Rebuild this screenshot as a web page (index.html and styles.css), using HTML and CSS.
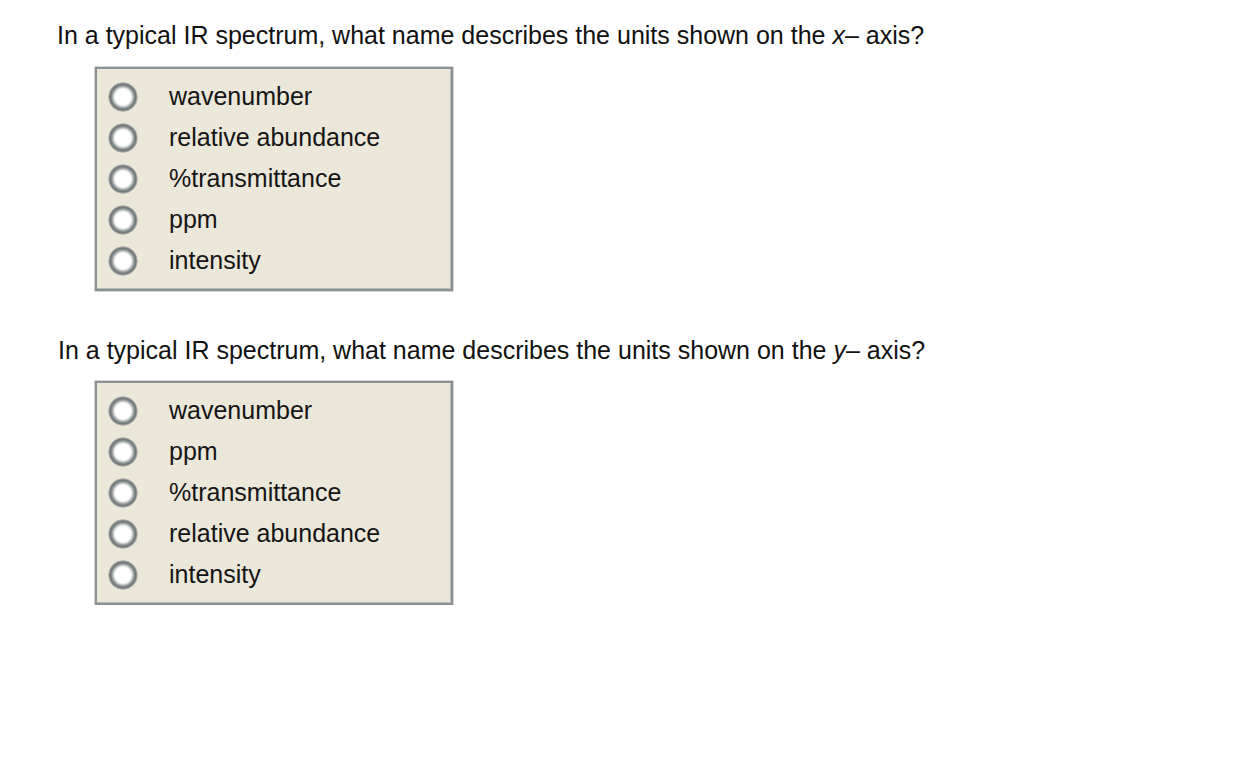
FILE: index.html
```html
<!DOCTYPE html>
<html>
<head>
<meta charset="utf-8">
<link rel="stylesheet" href="styles.css">
</head>
<body>
<div class="quiz">
  <section class="question">
    <p class="prompt">In a typical IR spectrum, what name describes the units shown on the <i>x</i>– axis?</p>
    <ul class="choices">
      <li class="choice"><span class="radio"></span><span class="label">wavenumber</span></li>
      <li class="choice"><span class="radio"></span><span class="label">relative abundance</span></li>
      <li class="choice"><span class="radio"></span><span class="label">%transmittance</span></li>
      <li class="choice"><span class="radio"></span><span class="label">ppm</span></li>
      <li class="choice"><span class="radio"></span><span class="label">intensity</span></li>
    </ul>
  </section>
  <section class="question second">
    <p class="prompt">In a typical IR spectrum, what name describes the units shown on the <i>y</i>– axis?</p>
    <ul class="choices">
      <li class="choice"><span class="radio"></span><span class="label">wavenumber</span></li>
      <li class="choice"><span class="radio"></span><span class="label">ppm</span></li>
      <li class="choice"><span class="radio"></span><span class="label">%transmittance</span></li>
      <li class="choice"><span class="radio"></span><span class="label">relative abundance</span></li>
      <li class="choice"><span class="radio"></span><span class="label">intensity</span></li>
    </ul>
  </section>
</div>
</body>
</html>
```
FILE: styles.css
```css
html, body {
  margin: 0;
  padding: 0;
  background: #ffffff;
}

body {
  font-family: "Liberation Sans", Arial, sans-serif;
  color: #111111;
}

.quiz {
  padding: 20px 0 0 57px;
}

.question {
  margin: 0;
}

.question.second {
  margin-top: 44px;
  padding-left: 1px;
}

.prompt {
  margin: 0;
  font-size: 25px;
  line-height: 30px;
}

.prompt i {
  font-style: italic;
}

.choices {
  list-style: none;
  margin: 17px 0 0 38px;
  padding: 14px 0 14px 0;
  width: 354px;
  background: #ebe7d9;
  border: 2px solid #8c9292;
  box-shadow: inset -1px -1px 0 #b7bbbb, 0 0 0 0.5px #a6abab;
  display: flex;
  flex-direction: column;
  gap: 13px;
}

.question.second .choices {
  margin-top: 16px;
  margin-left: 37px;
}

.choice {
  display: flex;
  align-items: center;
  height: 28px;
}

.radio {
  box-sizing: border-box;
  width: 28px;
  height: 28px;
  margin-left: 12px;
  border-radius: 50%;
  background: radial-gradient(circle at 50% 50%, #ffffff 0, #ffffff 7.5px, #e2e4e4 9px, #a4a9a9 10.5px, #6f7474 12.5px, #8c9191 14px);
  box-shadow: 0 0 0 0.5px #8a8f8f;
}

.label {
  margin-left: 32px;
  font-size: 25px;
  line-height: 28px;
  color: #151515;
  position: relative;
  top: -1px;
}
```
